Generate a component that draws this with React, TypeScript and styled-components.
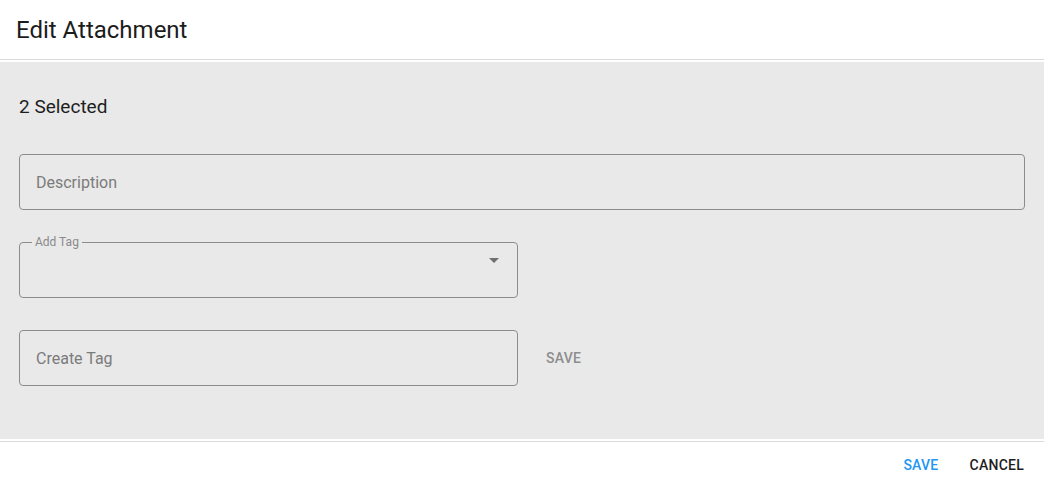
import React from 'react';
import styled, { createGlobalStyle } from 'styled-components';

const GlobalStyle = createGlobalStyle`
    html, body {
        margin: 0;
        padding: 0;
        background: #ffffff;
        font-family: Roboto, "Liberation Sans", Arial, sans-serif;
    }
`;

const Page = styled.div`
    width: 1044px;
    height: 487px;
    display: flex;
    flex-direction: column;
    background: #ffffff;
`;

const Header = styled.header`
    height: 59px;
    display: flex;
    align-items: center;
    padding: 0 16px;
    border-bottom: 1px solid #dadada;
`;

const Title = styled.h2`
    margin: 0;
    font-size: 24px;
    line-height: 24px;
    font-weight: 400;
    color: #1c1c1c;
`;

const Body = styled.main`
    height: 377px;
    margin: 2px 0;
    padding: 33px 19px 0;
    box-sizing: border-box;
    background: #e9e9e9;
    display: flex;
    flex-direction: column;
`;

const SelectedCount = styled.div`
    font-size: 19px;
    line-height: 24px;
    color: #1e1e1e;
    margin-bottom: 35px;
`;

const Form = styled.div`
    display: flex;
    flex-direction: column;
    gap: 32px;
`;

const Field = styled.div<{ $width: number }>`
    width: ${(p) => p.$width}px;
    height: 56px;
    box-sizing: border-box;
    border: 1px solid #8c8c8c;
    border-radius: 4px;
    display: flex;
    align-items: center;
`;

const Input = styled.input`
    flex: 1;
    height: 100%;
    border: none;
    outline: none;
    background: transparent;
    padding: 0 16px;
    font-family: inherit;
    font-size: 16px;
    color: #1e1e1e;

    &::placeholder {
        color: #7b7b7b;
        opacity: 1;
    }
`;

const SelectBox = styled.fieldset<{ $width: number }>`
    width: ${(p) => p.$width}px;
    height: 62px;
    margin: -6px 0 0;
    padding: 0 11px 6px 12px;
    box-sizing: border-box;
    border: 1px solid #8c8c8c;
    border-radius: 4px;
    display: flex;
    align-items: center;
    justify-content: flex-end;
    min-width: 0;
`;

const Legend = styled.legend`
    padding: 0 3px;
    font-size: 12px;
    line-height: 12px;
    color: #8a8a8a;
`;

const Row = styled.div`
    display: flex;
    align-items: center;
    gap: 20px;
`;

const TextButton = styled.button<{ $tone: 'muted' | 'primary' | 'default' }>`
    border: none;
    background: transparent;
    padding: 6px 8px;
    font-family: inherit;
    font-size: 14px;
    font-weight: 500;
    letter-spacing: 0.25px;
    line-height: 24px;
    text-transform: uppercase;
    cursor: pointer;
    color: ${(p) =>
        p.$tone === 'primary' ? '#2196f3' : p.$tone === 'muted' ? '#8d8d8d' : '#1e1e1e'};
`;

const Footer = styled.footer`
    flex: 1;
    border-top: 1px solid #dadada;
    display: flex;
    align-items: center;
    justify-content: flex-end;
    gap: 15px;
    padding-right: 12px;
`;

const DropArrow = () => (
    <svg width="24" height="24" viewBox="0 0 24 24" fill="#6f6f6f">
        <path d="M7 10l5 5 5-5z" />
    </svg>
);

const App = () => (
    <>
        <GlobalStyle />
        <Page>
            <Header>
                <Title>Edit Attachment</Title>
            </Header>
            <Body>
                <SelectedCount>2 Selected</SelectedCount>
                <Form>
                    <Field $width={1006}>
                        <Input placeholder="Description" />
                    </Field>
                    <SelectBox $width={499}>
                        <Legend>Add Tag</Legend>
                        <DropArrow />
                    </SelectBox>
                    <Row>
                        <Field $width={499}>
                            <Input placeholder="Create Tag" />
                        </Field>
                        <TextButton $tone="muted">Save</TextButton>
                    </Row>
                </Form>
            </Body>
            <Footer>
                <TextButton $tone="primary">Save</TextButton>
                <TextButton $tone="default">Cancel</TextButton>
            </Footer>
        </Page>
    </>
);

export default App;
